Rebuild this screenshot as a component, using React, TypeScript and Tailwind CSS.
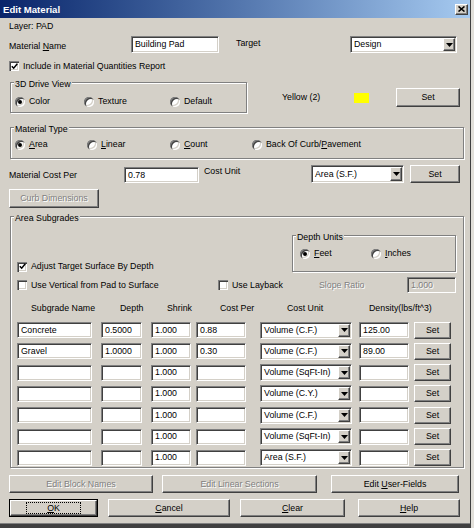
import React from "react";

const face = "font-['Liberation_Sans',Arial,sans-serif] text-[8.8px] leading-[11px]";
const sunken =
  "border border-t-[#808080] border-l-[#808080] border-b-white border-r-white shadow-[inset_1px_1px_0_#404040,inset_-1px_-1px_0_#d4d0c8]";
const raised =
  "border border-t-white border-l-white border-b-[#404040] border-r-[#404040] shadow-[inset_-1px_-1px_0_#808080]";
const dis = "text-[#808080] [text-shadow:1px_1px_0_#fff]";

type P = { className?: string; children?: React.ReactNode };

function Field({ value = "", disabled = false, className = "" }: { value?: string; disabled?: boolean; className?: string }) {
  return (
    <div
      className={`${sunken} ${disabled ? "bg-[#d4d0c8] " + dis : "bg-white"} flex items-center pl-[3px] overflow-hidden whitespace-nowrap shrink-0 ${className}`}
    >
      {value}
    </div>
  );
}

function Select({ value, className = "" }: { value: string; className?: string }) {
  return (
    <div className={`${sunken} bg-white flex items-stretch p-[1px] shrink-0 ${className}`}>
      <span className="flex-1 flex items-center pl-[2px] whitespace-nowrap overflow-hidden">{value}</span>
      <span className={`${raised} bg-[#d4d0c8] w-[12px] flex items-center justify-center`}>
        <svg width="7" height="4" viewBox="0 0 7 4">
          <path d="M0 0h7L3.5 4z" fill="#000" />
        </svg>
      </span>
    </div>
  );
}

function Btn({ className = "", disabled = false, children }: P & { disabled?: boolean }) {
  return (
    <div
      className={`${raised} bg-[#d4d0c8] flex items-center justify-center shrink-0 whitespace-nowrap ${disabled ? dis : ""} ${className}`}
    >
      <span>{children}</span>
    </div>
  );
}

function Radio({ checked = false }: { checked?: boolean }) {
  return (
    <span className="w-[10px] h-[10px] rounded-full bg-white shrink-0 flex items-center justify-center shadow-[inset_1px_1px_0_#808080,inset_2px_2px_0_#404040,inset_-1px_-1px_0_#fff,inset_-2px_-2px_0_#d4d0c8]">
      {checked && <span className="w-[4px] h-[4px] rounded-full bg-black" />}
    </span>
  );
}

function Check({ checked = false }: { checked?: boolean }) {
  return (
    <span className="w-[10px] h-[10px] bg-white shrink-0 flex items-center justify-center shadow-[inset_1px_1px_0_#808080,inset_2px_2px_0_#404040,inset_-1px_-1px_0_#fff,inset_-2px_-2px_0_#d4d0c8]">
      {checked && (
        <svg width="7" height="7" viewBox="0 0 7 7">
          <path d="M0.8 3.2l1.9 2 3.6-4.4" stroke="#000" strokeWidth="1.5" fill="none" />
        </svg>
      )}
    </span>
  );
}

function Opt({ checked, className = "", children }: P & { checked?: boolean }) {
  return (
    <div className={`flex items-center shrink-0 ${className}`}>
      <Radio checked={checked} />
      <span className="ml-[4px] whitespace-nowrap">{children}</span>
    </div>
  );
}

function Box({ checked, className = "", children }: P & { checked?: boolean }) {
  return (
    <div className={`flex items-center shrink-0 ${className}`}>
      <Check checked={checked} />
      <span className="ml-[4px] whitespace-nowrap">{children}</span>
    </div>
  );
}

function Group({ label, className = "", children }: P & { label: string }) {
  return (
    <div className={`relative border border-[#808080] shadow-[inset_1px_1px_0_#fff,1px_1px_0_#fff] shrink-0 ${className}`}>
      <span className="absolute -top-[4px] left-[3px] px-[1px] bg-[#d4d0c8] whitespace-nowrap">{label}</span>
      {children}
    </div>
  );
}

const rows = [
  ["Concrete", "0.5000", "1.000", "0.88", "Volume (C.F.)", "125.00"],
  ["Gravel", "1.0000", "1.000", "0.30", "Volume (C.F.)", "89.00"],
  ["", "", "1.000", "", "Volume (SqFt-In)", ""],
  ["", "", "1.000", "", "Volume (C.Y.)", ""],
  ["", "", "1.000", "", "Volume (C.F.)", ""],
  ["", "", "1.000", "", "Volume (SqFt-In)", ""],
  ["", "", "1.000", "", "Area (S.F.)", ""],
];

export default function App() {
  return (
    <div className={`w-[474px] h-[528px] bg-[#e2e0da] overflow-hidden ${face} text-black`}>
      <div className="w-[471px] h-[528px] bg-[#d4d0c8] border-r border-r-[#404040] flex flex-col">
        {/* title bar */}
        <div className="h-[18px] shrink-0 bg-linear-to-r from-[#0a246a] to-[#a6caf0] flex items-center pl-[3px] pr-[2px]">
          <span className="flex-1 text-white font-bold text-[9.6px]">Edit Material</span>
          <span className={`${raised} bg-[#d4d0c8] w-[13px] h-[11px] flex items-center justify-center`}>
            <svg width="7" height="6" viewBox="0 0 7 6">
              <path d="M0.5 0.5l6 5M6.5 0.5l-6 5" stroke="#000" strokeWidth="1.6" />
            </svg>
          </span>
        </div>

        <div className="mt-[2px] h-[12px] pl-[9px] flex items-center">Layer: PAD</div>

        <div className="mt-[4px] h-[17px] pl-[9px] flex items-center">
          <span className="w-[122px] shrink-0 mt-[3px]">
            Material <u>N</u>ame
          </span>
          <Field value="Building Pad" className="w-[88px] h-[17px]" />
          <span className="ml-[17px] w-[114px] shrink-0 -mt-[3px]">Target</span>
          <Select value="Design" className="w-[107px] h-[17px]" />
        </div>

        <div className="mt-[8px] h-[10px] pl-[9px] flex items-center">
          <Box checked>Include in Material Quantities Report</Box>
        </div>

        <div className="mt-[11px] h-[31px] pl-[10px] flex items-center">
          <Group label="3D Drive View" className="w-[237px] h-[31px]">
            <div className="pt-[13px] pl-[4px] flex">
              <Opt checked className="w-[69px]">Color</Opt>
              <Opt className="w-[86px]">Texture</Opt>
              <Opt>Default</Opt>
            </div>
          </Group>
          <span className="ml-[35px] w-[72px] shrink-0">Yellow (2)</span>
          <span className="w-[15px] h-[10px] bg-[#ffff00] shrink-0" />
          <Btn className="ml-[27px] w-[64px] h-[19px]">Set</Btn>
        </div>

        <div className="mt-[14px] h-[32px] pl-[10px] flex">
          <Group label="Material Type" className="w-[454px] h-[32px]">
            <div className="pt-[11px] pl-[4px] flex">
              <Opt checked className="w-[72px]">
                <u>A</u>rea
              </Opt>
              <Opt className="w-[83px]">
                <u>L</u>inear
              </Opt>
              <Opt className="w-[82px]">
                <u>C</u>ount
              </Opt>
              <Opt>
                Back Of Curb/<u>P</u>avement
              </Opt>
            </div>
          </Group>
        </div>

        <div className="mt-[5px] h-[20px] pl-[9px] flex items-start">
          <span className="w-[115px] shrink-0 mt-[6px]">Material Cost Per</span>
          <Field value="0.78" className="w-[75px] h-[16px] mt-[3px]" />
          <span className="ml-[5px] w-[107px] shrink-0 mt-[2px]">Cost Unit</span>
          <Select value="Area (S.F.)" className="w-[93px] h-[18px] mt-[1px]" />
          <Btn className="ml-[6px] w-[50px] h-[18px] mt-[1px]">Set</Btn>
        </div>

        <div className="mt-[5px] h-[19px] pl-[9px] flex">
          <Btn disabled className="w-[90px] h-[19px]">
            Curb Dimensions
          </Btn>
        </div>

        <div className="mt-[8px] pl-[10px] flex">
          <Group label="Area Subgrades" className="w-[454px] h-[252px] flex flex-col">
            <div className="mt-[18px] h-[37px] flex">
              <div className="w-[281px] shrink-0 pl-[6px] flex items-end">
                <Box checked>Adjust Target Surface By Depth</Box>
              </div>
              <Group label="Depth Units" className="w-[164px] h-[37px]">
                <div className="pt-[12px] pl-[7px] flex">
                  <Opt checked className="w-[71px]">
                    <u>F</u>eet
                  </Opt>
                  <Opt>
                    <u>I</u>nches
                  </Opt>
                </div>
              </Group>
            </div>

            <div className="mt-[5px] h-[16px] pl-[6px] flex items-center">
              <Box className="w-[201px]">Use Vertical from Pad to Surface</Box>
              <Box className="w-[101px]">Use Layback</Box>
              <span className={`w-[88px] shrink-0 ${dis}`}>Slope Ratio</span>
              <Field disabled value="1.000" className="w-[49px] h-[16px]" />
            </div>

            <div className="mt-[9px] h-[12px] pl-[20px] flex items-center whitespace-nowrap">
              <span className="w-[89px] shrink-0">Subgrade Name</span>
              <span className="w-[47px] shrink-0">Depth</span>
              <span className="w-[53px] shrink-0">Shrink</span>
              <span className="w-[67px] shrink-0">Cost Per</span>
              <span className="w-[82px] shrink-0">Cost Unit</span>
              <span>Density(lbs/ft^3)</span>
            </div>

            <div className="mt-[8px] flex flex-col gap-[5.33px]">
              {rows.map((r, i) => (
                <div key={i} className="h-[16px] pl-[6px] flex items-center">
                  <Field value={r[0]} className="w-[75px] h-[16px]" />
                  <Field value={r[1]} className="ml-[9px] w-[41px] h-[16px]" />
                  <Field value={r[2]} className="ml-[9px] w-[40px] h-[16px]" />
                  <Field value={r[3]} className="ml-[5px] w-[50px] h-[16px]" />
                  <Select value={r[4]} className="ml-[14px] w-[92px] h-[17px]" />
                  <Field value={r[5]} className="ml-[7px] w-[50px] h-[16px]" />
                  <Btn className="ml-[5px] w-[37px] h-[17px]">Set</Btn>
                </div>
              ))}
            </div>
          </Group>
        </div>

        <div className="mt-[7px] h-[18px] pl-[9px] flex">
          <Btn disabled className="w-[144px] h-[18px]">
            Edit Block Names
          </Btn>
          <Btn disabled className="ml-[9px] w-[155px] h-[18px]">
            Edit Linear Sections
          </Btn>
          <Btn className="ml-[14px] w-[128px] h-[18px]">
            Edit <u>U</u>ser-Fields
          </Btn>
        </div>

        <div className="mt-[6px] h-[18px] pl-[9px] flex">
          <div className="w-[89px] h-[18px] border border-black flex shrink-0">
            <Btn className="flex-1 h-full">
              <span className="inline-block border border-dotted border-black px-[20px] leading-[10px]">
                <u>O</u>K
              </span>
            </Btn>
          </div>
          <Btn className="ml-[10px] w-[122px] h-[18px]">
            <u>C</u>ancel
          </Btn>
          <Btn className="ml-[10px] w-[105px] h-[18px]">
            <u>C</u>lear
          </Btn>
          <Btn className="ml-[13px] w-[102px] h-[18px]">
            <u>H</u>elp
          </Btn>
        </div>

        <div className="flex-1" />
        <div className="h-[5px] shrink-0 bg-[#404040] border-t border-t-[#808080]" />
      </div>
    </div>
  );
}
